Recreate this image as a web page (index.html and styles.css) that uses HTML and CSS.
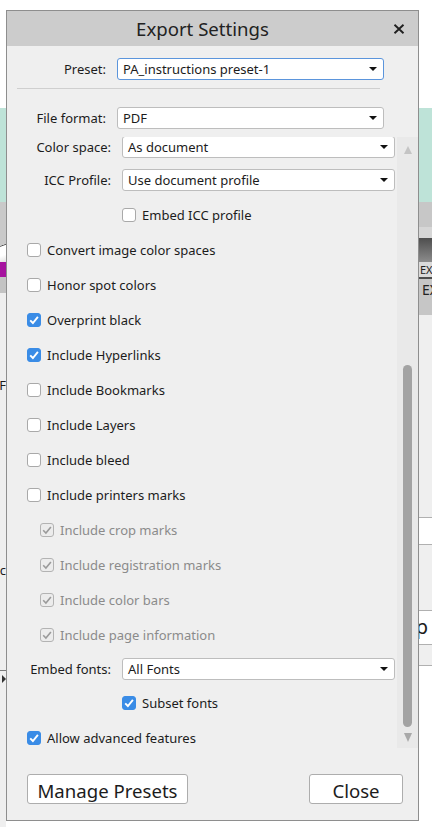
FILE: index.html
```html
<!DOCTYPE html>
<html lang="en">
<head>
  <meta charset="UTF-8">
  <meta name="viewport" content="width=device-width, initial-scale=1.0">
  <title>Export Settings</title>
  <link rel="stylesheet" href="styles.css">
</head>
<body>
  <!-- app behind the dialog, left edge -->
  <div class="app-left">
    <div class="band b-white"></div>
    <div class="band b-mint"></div>
    <div class="band l-gray"></div>
    <div class="band l-icon"></div>
    <div class="band l-magenta"></div>
    <div class="band l-gray2"></div>
    <div class="band l-body">
      <div class="frag f1"><span>PDF</span></div>
      <div class="frag f2"><span>Selec</span></div>
      <div class="l-rule"></div>
      <div class="l-cursor"></div>
    </div>
  </div>

  <div class="dialog">
    <div class="titlebar">
      <div class="title">Export Settings</div>
      <svg class="close" width="12" height="10" viewBox="0 0 12 10">
        <path d="M1.5 0.8 L10.5 9.2 M10.5 0.8 L1.5 9.2" stroke="#1f1f1f" stroke-width="1.9" fill="none"/>
      </svg>
    </div>

    <div class="head">
      <div class="field top">
        <label>Preset:</label>
        <div class="select focus"><span>PA_instructions preset-1</span><i class="caret"></i></div>
      </div>
      <div class="sep"></div>
      <div class="field top">
        <label>File format:</label>
        <div class="select"><span>PDF</span><i class="caret"></i></div>
      </div>
    </div>

    <div class="scroll">
      <div class="scroll-view">
        <div class="rows">
          <div class="field r33">
            <label>Color space:</label>
            <div class="select"><span>As document</span><i class="caret"></i></div>
          </div>
          <div class="field r34">
            <label>ICC Profile:</label>
            <div class="select"><span>Use document profile</span><i class="caret"></i></div>
          </div>
          <div class="check inset"><span class="box"></span>Embed ICC profile</div>
          <div class="check"><span class="box"></span>Convert image color spaces</div>
          <div class="check"><span class="box"></span>Honor spot colors</div>
          <div class="check"><span class="box on"><svg width="14" height="14" viewBox="0 0 14 14"><path d="M3.2 7.3 L5.9 10 L10.9 3.9" /></svg></span>Overprint black</div>
          <div class="check"><span class="box on"><svg width="14" height="14" viewBox="0 0 14 14"><path d="M3.2 7.3 L5.9 10 L10.9 3.9" /></svg></span>Include Hyperlinks</div>
          <div class="check"><span class="box"></span>Include Bookmarks</div>
          <div class="check"><span class="box"></span>Include Layers</div>
          <div class="check"><span class="box"></span>Include bleed</div>
          <div class="check"><span class="box"></span>Include printers marks</div>
          <div class="check sub dim"><span class="box"><svg width="14" height="14" viewBox="0 0 14 14"><path d="M3.2 7.3 L5.9 10 L10.9 3.9" /></svg></span>Include crop marks</div>
          <div class="check sub dim"><span class="box"><svg width="14" height="14" viewBox="0 0 14 14"><path d="M3.2 7.3 L5.9 10 L10.9 3.9" /></svg></span>Include registration marks</div>
          <div class="check sub dim"><span class="box"><svg width="14" height="14" viewBox="0 0 14 14"><path d="M3.2 7.3 L5.9 10 L10.9 3.9" /></svg></span>Include color bars</div>
          <div class="check sub dim"><span class="box"><svg width="14" height="14" viewBox="0 0 14 14"><path d="M3.2 7.3 L5.9 10 L10.9 3.9" /></svg></span>Include page information</div>
          <div class="field r33">
            <label>Embed fonts:</label>
            <div class="select"><span>All Fonts</span><i class="caret"></i></div>
          </div>
          <div class="check inset"><span class="box on"><svg width="14" height="14" viewBox="0 0 14 14"><path d="M3.2 7.3 L5.9 10 L10.9 3.9" /></svg></span>Subset fonts</div>
          <div class="check"><span class="box on"><svg width="14" height="14" viewBox="0 0 14 14"><path d="M3.2 7.3 L5.9 10 L10.9 3.9" /></svg></span>Allow advanced features</div>
        </div>
      </div>
      <div class="scrollbar">
        <i class="arrow-up"></i>
        <div class="thumb"></div>
        <i class="arrow-down"></i>
      </div>
    </div>

    <div class="footer">
      <div class="btn manage">Manage Presets</div>
      <div class="btn close-btn">Close</div>
    </div>
  </div>

  <!-- app behind the dialog, right edge -->
  <div class="app-right">
    <div class="band b-white"></div>
    <div class="band b-mint"></div>
    <div class="band r-gray"></div>
    <div class="band r-gray-lt"></div>
    <div class="band r-dark"></div>
    <div class="band r-ex-small">EX</div>
    <div class="band r-ex">EX</div>
    <div class="band r-panel"></div>
    <div class="band r-box"></div>
    <div class="band r-panel2"></div>
    <div class="band r-box2"><span>Exp</span></div>
    <div class="band r-panel3"></div>
    <div class="band r-rest"></div>
  </div>
</body>
</html>
```

FILE: styles.css
```css
* {
  margin: 0;
  padding: 0;
  box-sizing: border-box;
}

body {
  width: 432px;
  height: 827px;
  overflow: hidden;
  display: flex;
  align-items: flex-start;
  background: #fff;
  font-family: 'Noto Sans', 'Open Sans', sans-serif;
  color: #1c1c1c;
}

/* ---- background app strips ---- */
.app-left {
  width: 6px;
  height: 827px;
  display: flex;
  flex-direction: column;
  overflow: hidden;
}

.app-right {
  flex: 1;
  height: 827px;
  display: flex;
  flex-direction: column;
  overflow: hidden;
}

.band {
  flex: none;
}

.b-white { height: 108px; background: #fff; }
.b-mint { height: 94px; background: #bee3d8; }

.l-gray { height: 36px; background: #c9c9c9; }
.l-icon {
  height: 24px;
  background: linear-gradient(160deg, #c9c9c9 30%, #4a4a4a 32%, #fff 36%, #fff 70%, #e2e2e2);
}
.l-magenta { height: 15px; background: #a6139f; }
.l-gray2 { height: 16px; background: #c3c3c3; }
.l-body {
  flex: 1;
  background: #efefef;
  display: flex;
  flex-direction: column;
}

.frag {
  display: flex;
  justify-content: flex-end;
  white-space: nowrap;
  font-size: 13px;
  line-height: 18px;
}
.f1 { margin-top: 83px; }
.f2 { margin-top: 167px; }

.l-rule {
  margin-top: 91px;
  height: 1px;
  background: #7a7a7a;
}

.l-cursor {
  margin: 4px 0 0 2px;
  width: 0;
  height: 0;
  border-left: 4px solid #333;
  border-top: 4px solid transparent;
  border-bottom: 4px solid transparent;
}

.r-gray { height: 25px; background: #c7c7c7; }
.r-gray-lt { height: 11px; background: #d6d6d6; }
.r-dark { height: 24px; background: linear-gradient(#4e4e4e, #8c8c8c); }
.r-ex-small {
  height: 17px;
  background: #dadada;
  border-bottom: 2px solid #4d4d4d;
  font-size: 11px;
  line-height: 15px;
  padding-left: 1px;
  color: #222;
}
.r-ex {
  height: 36px;
  background: #c6c6c6;
  font-size: 14px;
  line-height: 22px;
  padding-left: 3px;
  color: #222;
}
.r-panel { height: 202px; background: #efefef; }
.r-box {
  height: 28px;
  background: #fff;
  border-top: 1px solid #b0b0b0;
  border-bottom: 1px solid #b0b0b0;
}
.r-panel2 { height: 65px; background: #efefef; }
.r-box2 {
  height: 35px;
  background: #fff;
  border-top: 1px solid #b0b0b0;
  border-bottom: 1px solid #b0b0b0;
  display: flex;
  justify-content: flex-end;
  font-size: 20px;
  line-height: 32px;
  white-space: nowrap;
  padding-right: 4px;
}
.r-panel3 { height: 20px; background: #efefef; }
.r-rest { flex: 1; background: #fff; border-top: 1px solid #b0b0b0; }

/* ---- dialog ---- */
.dialog {
  flex: none;
  width: 413px;
  height: 811px;
  margin-top: 10px;
  border: 1px solid #8e8e8e;
  background: #efefef;
  display: flex;
  flex-direction: column;
}

.titlebar {
  height: 35px;
  background: #cccccc;
  display: flex;
  align-items: center;
}

.title {
  flex: 1;
  text-align: center;
  padding-left: 5px;
  font-size: 18.6px;
  line-height: 26px;
  margin-top: 1px;
  color: #222;
}

.close {
  margin-right: 13px;
}

.head {
  padding-top: 12px;
}

.sep {
  height: 1px;
  margin: 8px 38px 18px 10px;
  background: #cfcfcf;
}

.field {
  display: grid;
  grid-template-columns: 104px 273px;
  column-gap: 11px;
  align-items: center;
}

.field.top {
  grid-template-columns: 99px 267px;
}

.field label {
  text-align: right;
  font-size: 13px;
  white-space: nowrap;
}

.r33 { height: 33px; }
.r34 { height: 34px; }

.select {
  height: 22px;
  background: #fff;
  border: 1px solid #bdbdbd;
  border-radius: 3px;
  display: flex;
  align-items: center;
  justify-content: space-between;
  padding: 0 6px 0 5px;
  font-size: 13px;
  white-space: nowrap;
}

.select.focus {
  border-color: #5b95dc;
}

.caret {
  width: 0;
  height: 0;
  border-left: 4px solid transparent;
  border-right: 4px solid transparent;
  border-top: 4px solid #111;
}

.scroll {
  margin-top: 8px;
  height: 611px;
  display: flex;
}

.scroll-view {
  flex: 1;
  overflow: hidden;
}

.rows {
  margin-top: -7px;
}

.check {
  height: 35px;
  display: flex;
  align-items: center;
  gap: 6px;
  padding-left: 20px;
  font-size: 13px;
  white-space: nowrap;
}

.check.sub { padding-left: 33px; }
.check.inset { padding-left: 115px; }
.check.dim { color: #8b8b8b; }

.box {
  flex: none;
  width: 14px;
  height: 14px;
  border: 1px solid #a9a9a9;
  border-radius: 3px;
  background: #fff;
  display: flex;
  align-items: center;
  justify-content: center;
}

.box svg {
  flex: none;
}

.box path {
  fill: none;
  stroke: #fff;
  stroke-width: 1.9;
}

.box.on {
  background: #3a8ce6;
  border-color: #3a8ce6;
}

.check.dim .box {
  background: #ececec;
  border-color: #b3b3b3;
}

.check.dim .box path {
  stroke: #9a9a9a;
  stroke-width: 1.6;
}

.scrollbar {
  width: 21px;
  background: #e9e9e9;
  display: flex;
  flex-direction: column;
  align-items: center;
}

.arrow-up {
  margin-top: 9px;
  width: 0;
  height: 0;
  border-left: 4.5px solid transparent;
  border-right: 4.5px solid transparent;
  border-bottom: 8px solid #c4c4c4;
}

.thumb {
  margin-top: 211px;
  width: 9px;
  height: 362px;
  border-radius: 5px;
  background: #a3a3a3;
}

.arrow-down {
  margin-top: 6px;
  width: 0;
  height: 0;
  border-left: 4.5px solid transparent;
  border-right: 4.5px solid transparent;
  border-top: 9px solid #a9a9a9;
}

.footer {
  flex: 1;
  display: flex;
  justify-content: space-between;
  align-items: flex-start;
  padding: 26px 15px 0 20px;
}

.btn {
  height: 30px;
  background: #fff;
  border: 1px solid #adadad;
  border-radius: 3px;
  display: flex;
  align-items: center;
  justify-content: center;
  padding-top: 2px;
  font-size: 18.6px;
  white-space: nowrap;
  color: #1c1c1c;
}

.btn.manage { width: 161px; }
.btn.close-btn { width: 94px; }
```
